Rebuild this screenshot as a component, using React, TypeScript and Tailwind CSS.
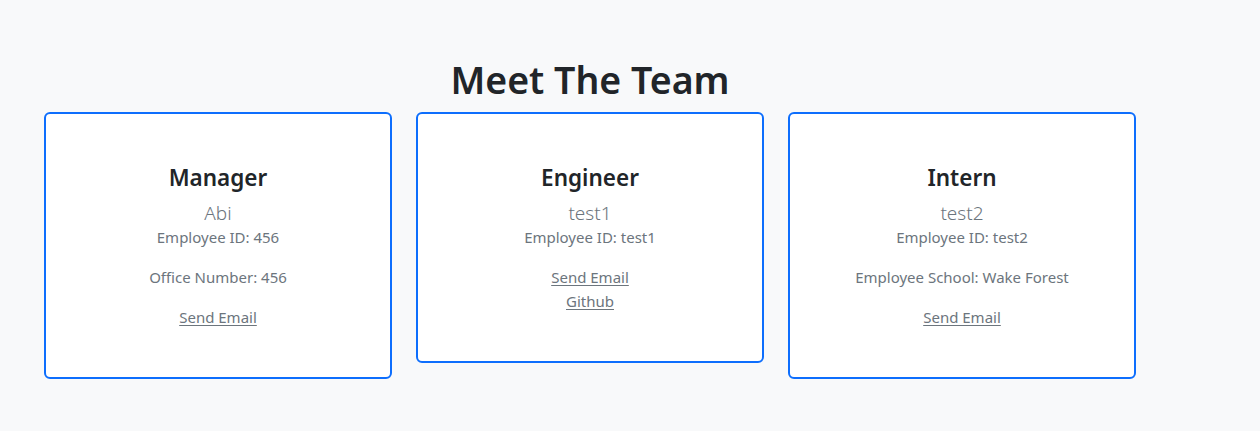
import React from "react"

type Member = {
  role: string
  name: string
  id: string
  extra?: string
  links: string[]
}

const TEAM: Member[] = [
  { role: "Manager", name: "Abi", id: "456", extra: "Office Number: 456", links: ["Send Email"] },
  { role: "Engineer", name: "test1", id: "test1", links: ["Send Email", "Github"] },
  { role: "Intern", name: "test2", id: "test2", extra: "Employee School: Wake Forest", links: ["Send Email"] },
]

function MemberCard({ member }: { member: Member }) {
  return (
    <div className="w-[348px] rounded-[6px] border-2 border-[#0d6efd] bg-white px-5 pt-[50px] pb-[48px] text-center">
      <h4 className="mb-2 text-[22.5px] leading-[28.8px] font-semibold text-[#212529]">{member.role}</h4>
      <p className="text-[19px] leading-6 font-light text-[#6c757d]">{member.name}</p>
      <p className="mb-4 text-[15px] leading-6 text-[#6c757d]">Employee ID: {member.id}</p>
      {member.extra && <p className="mb-4 text-[15px] leading-6 text-[#6c757d]">{member.extra}</p>}
      <div className="flex flex-col items-center">
        {member.links.map((label) => (
          <a key={label} href="#" className="text-[15px] leading-6 text-[#6c757d] underline underline-offset-2">
            {label}
          </a>
        ))}
      </div>
    </div>
  )
}

export default function App() {
  return (
    <div className="min-h-[431px] bg-[#f8f9fa] pt-[56px] font-['Noto_Sans','Open_Sans',sans-serif]">
      <div className="ml-[44px] w-[1092px]">
        <h1 className="mb-2 text-center text-[37.5px] leading-[48px] font-semibold text-[#212529]">Meet The Team</h1>
        {/* Cards */}
        <div className="flex items-start gap-6">
          {TEAM.map((m) => (
            <MemberCard key={m.role} member={m} />
          ))}
        </div>
      </div>
    </div>
  )
}
